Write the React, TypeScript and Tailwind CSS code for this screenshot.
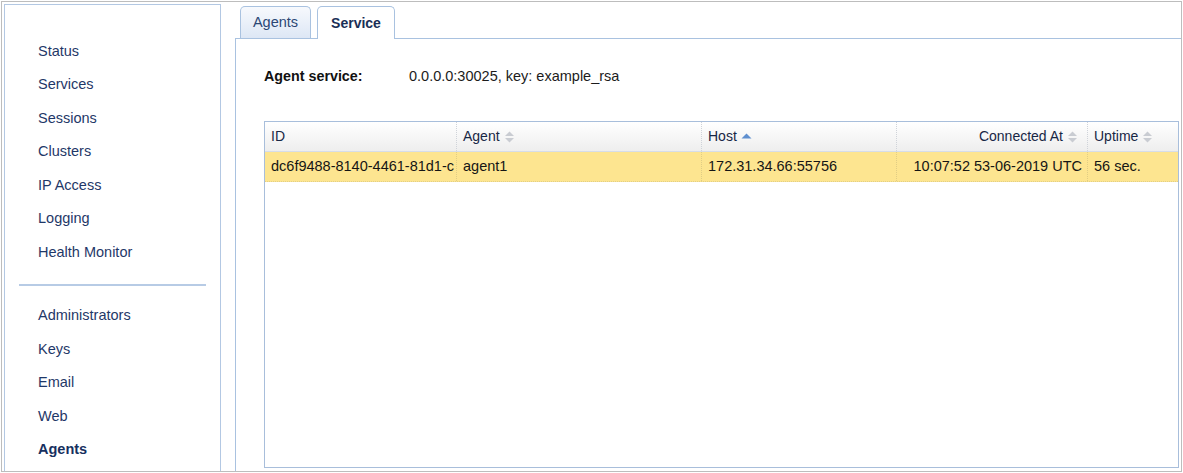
import React from 'react';

const mainLinks = ['Status', 'Services', 'Sessions', 'Clusters', 'IP Access', 'Logging', 'Health Monitor'];
const adminLinks = ['Administrators', 'Keys', 'Email', 'Web', 'Agents'];

const columns = [
  { label: 'ID', sort: null, align: 'left' },
  { label: 'Agent', sort: 'none', align: 'left' },
  { label: 'Host', sort: 'asc', align: 'left' },
  { label: 'Connected At', sort: 'none', align: 'right' },
  { label: 'Uptime', sort: 'none', align: 'left' },
];

const row = ['dc6f9488-8140-4461-81d1-c', 'agent1', '172.31.34.66:55756', '10:07:52 53-06-2019 UTC', '56 sec.'];

function SortIcon({ kind }: { kind: string | null }) {
  if (!kind) return null;
  if (kind === 'asc') {
    return (
      <svg width="11" height="12" viewBox="0 0 11 12" className="ml-1 shrink-0">
        <polygon points="0.5,7.5 5.5,2.5 10.5,7.5" fill="#5f8fcf" />
      </svg>
    );
  }
  return (
    <svg width="11" height="12" viewBox="0 0 11 12" className="ml-1 shrink-0">
      <polygon points="1,5 5.5,0.5 10,5" fill="#c9ccd2" />
      <polygon points="1,7 5.5,11.5 10,7" fill="#c9ccd2" />
    </svg>
  );
}

export default function App() {
  return (
    <div
      className="w-[1183px] h-[473px] bg-white p-px overflow-hidden"
      style={{ fontFamily: '"Liberation Sans", Arial, sans-serif' }}
    >
      <div className="h-full border border-[#bdbdbd] flex overflow-hidden">
        {/* Sidebar */}
        <aside className="ml-[2px] mt-[2px] w-[217px] shrink-0 border border-b-0 border-[#b3c8e3] pt-[30px]">
          <ul>
            {mainLinks.map((l) => (
              <li key={l} className="h-[33.5px] flex items-center pl-[33px] text-[14.5px] text-[#1f3868]">
                {l}
              </li>
            ))}
          </ul>
          <div className="mx-[14px] mt-[14px] mb-[14px] h-[2px] bg-[#b7cbe5]" />
          <ul>
            {adminLinks.map((l) => (
              <li
                key={l}
                className={`h-[33.5px] flex items-center pl-[33px] text-[14.5px] text-[#1f3868] ${
                  l === 'Agents' ? 'font-bold text-[#17305f]' : ''
                }`}
              >
                {l}
              </li>
            ))}
          </ul>
        </aside>

        {/* Main */}
        <main className="ml-[14px] flex-1 flex flex-col min-w-0">
          <div className="flex items-end gap-[6px] pl-[5px] mt-[2px] h-[34px]">
            <div className="h-[32px] w-[71px] flex items-center justify-center rounded-t-[5px] border border-b-0 border-[#a9c2e0] bg-gradient-to-b from-[#f7f9fd] to-[#dde7f5] text-[14.5px] text-[#2b4775]">
              Agents
            </div>
            <div className="h-[33px] w-[78px] flex items-center justify-center rounded-t-[5px] border border-b-0 border-[#a9c2e0] bg-white text-[14px] font-bold text-[#1a2f56] relative top-px">
              Service
            </div>
          </div>
          <div className="flex-1 border-l border-t border-[#a9c2e0] pl-[28px] pt-[29px] flex flex-col">
            <div className="flex items-center text-[14.5px] h-[18px]">
              <span className="w-[145px] font-bold text-[14.3px] text-[#111]">Agent service:</span>
              <span className="text-[#1c1c1c]">0.0.0.0:30025, key: example_rsa</span>
            </div>

            <div className="mt-[35px] w-[915px] h-[347px] border border-[#a8bedb] flex flex-col">
              <div className="grid grid-cols-[192px_245px_195px_191px_1fr] h-[30px] bg-gradient-to-b from-white to-[#eeeeee] border-b border-[#d6dde8]">
                {columns.map((c, i) => (
                  <div
                    key={c.label}
                    className={`flex items-center px-[6px] text-[14px] text-[#182745] ${
                      c.align === 'right' ? 'justify-end pr-[9px]' : ''
                    } ${i < columns.length - 1 ? 'border-r border-dotted border-[#cfd3d9]' : ''}`}
                  >
                    {c.label}
                    <SortIcon kind={c.sort} />
                  </div>
                ))}
              </div>
              <div className="grid grid-cols-[192px_245px_195px_191px_1fr] h-[30px] bg-[#fde590] border-b border-dotted border-[#e2cf86]">
                {row.map((v, i) => (
                  <div
                    key={i}
                    className={`flex items-center overflow-hidden whitespace-nowrap pl-[6px] text-[14.5px] text-[#151515] ${
                      i === 3 ? 'justify-end pr-[5px]' : ''
                    } ${i < row.length - 1 ? 'border-r border-dotted border-[#e0cd85]' : ''}`}
                  >
                    {v}
                  </div>
                ))}
              </div>
              <div className="flex-1 bg-white" />
            </div>
          </div>
        </main>
      </div>
    </div>
  );
}
